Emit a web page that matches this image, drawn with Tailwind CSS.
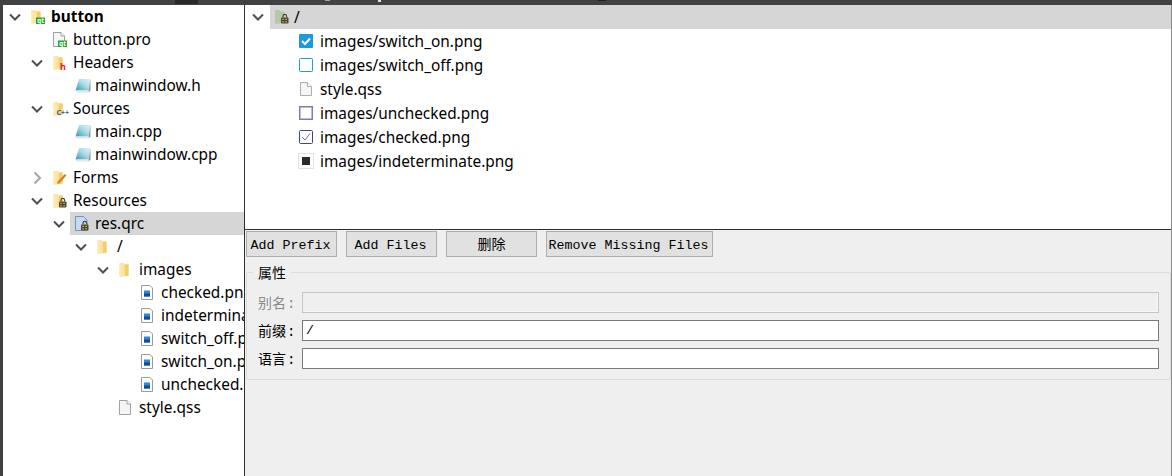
<!DOCTYPE html>
<html lang="en">

<head>
    <meta charset="UTF-8" />
    <script src="https://cdn.jsdelivr.net/npm/@tailwindcss/browser@4"></script>
    <title>Resource editor</title>
</head>

<body class="w-[1172px] h-[476px] overflow-hidden bg-[#404244] font-['Noto_Sans','Noto_Sans_CJK_SC',sans-serif] text-[15.4px] leading-[22px] text-black">

    <svg class="absolute w-0 h-0">
        <defs>
            <linearGradient id="fold" x1="0" y1="0" x2="1" y2="0">
                <stop offset="0" stop-color="#fdeebb" />
                <stop offset="1" stop-color="#f8d680" />
            </linearGradient>
            <linearGradient id="cpp" x1="0" y1="1" x2="1" y2="0">
                <stop offset="0" stop-color="#3f93b0" />
                <stop offset=".55" stop-color="#a9dde8" />
                <stop offset="1" stop-color="#dff3f6" />
            </linearGradient>
            <symbol id="chev-down" viewBox="0 0 16 16">
                <path d="M3 5.5l5 5 5-5" fill="none" stroke="#4f4f4f" stroke-width="2" />
            </symbol>
            <symbol id="chev-right" viewBox="0 0 16 16">
                <path d="M5.5 2.5l5.5 5.5-5.5 5.5" fill="none" stroke="#a6a6a6" stroke-width="2" />
            </symbol>
            <symbol id="folder" viewBox="0 0 16 16">
                <path d="M0 1h4.5l1.5 1.5h3.5v11l-6.5 1.2H0z" fill="url(#fold)" />
                <path d="M6 2.5h3.5v11l-3.5 .8z" fill="#f6cd68" />
            </symbol>
            <symbol id="lock" viewBox="0 0 16 16">
                <path d="M8 8.5V7.2a1.8 1.8 0 0 1 3.6 0v1.3" fill="none" stroke="#4b4630" stroke-width="1.2" />
                <rect x="6" y="8.5" width="7.5" height="6" rx="1" fill="#4b4630" />
                <path d="M7.3 9.8h1.5V11H7.3zm3 0h1.5V11h-1.5zM7.3 12.2h1.5v1.2H7.3zm3 0h1.5v1.2h-1.5z" fill="#d8b860" />
            </symbol>
            <symbol id="page" viewBox="0 0 16 16">
                <path d="M.5 .5h7.5l3.5 3.5v10.5h-11z" fill="#f5f5f5" stroke="#a0a0a0" />
                <path d="M8 .5v3.5h3.5" fill="#fff" stroke="#a0a0a0" />
            </symbol>
            <symbol id="png" viewBox="0 0 16 16">
                <path d="M.5 .5h8.5l2.5 2.5v11.5h-11z" fill="#fff" stroke="#9a9a9a" />
                <rect x="3" y="5.5" width="6" height="6" fill="#2a88d8" />
                <rect x="3" y="8.5" width="6" height="3" fill="#124a90" />
            </symbol>
            <symbol id="source" viewBox="0 0 16 16">
                <path d="M4 1h11.5l-2 11.5H.5z" fill="url(#cpp)" />
                <path d="M15.5 1v11.5l-2 2v-2z" fill="#9a9a9a" />
                <path d="M.5 12.5h13v2H1z" fill="#dfe8ea" />
            </symbol>
        </defs>
    </svg>

    <div class="absolute top-0 left-[175px] w-[23px] h-[4px] bg-[#2a2a2a]"></div>
    <div class="absolute top-0 left-[325px] w-[5px] h-[1px] bg-[#a0a0a0]"></div>
    <div class="absolute top-0 left-[378px] w-[3px] h-[2px] bg-[#e0e0e0]"></div>
    <div class="absolute top-0 left-[598px] w-[8px] h-[1px] bg-[#1f1f1f]"></div>

    <div class="flex h-full pt-[5px] pl-[3px]">

        <!-- project tree -->
        <div class="w-[241px] shrink-0 bg-white overflow-hidden whitespace-nowrap">
            <div class="flex h-[23px] items-center pl-[4px]">
                <svg class="size-4 shrink-0"><use href="#chev-down" /></svg>
                <div class="flex-1 h-full ml-[3px] pl-[5px] flex items-center gap-1">
                    <svg class="size-4 shrink-0" viewBox="0 0 16 16"><use href="#folder" /><rect x="5" y="8.5" width="9" height="6.5" fill="#1fa52d" /><text x="9.5" y="13.8" text-anchor="middle" font-size="6.5" font-weight="700" fill="#fff">qt</text></svg>
                    <span class="font-bold">button</span>
                </div>
            </div>
            <div class="flex h-[23px] items-center pl-[26px]">
                <div class="size-4 shrink-0"></div>
                <div class="flex-1 h-full ml-[3px] pl-[5px] flex items-center gap-1">
                    <svg class="size-4 shrink-0" viewBox="0 0 16 16"><use href="#page" /><rect x="5" y="8.5" width="9" height="6.5" fill="#1fa52d" /><text x="9.5" y="13.8" text-anchor="middle" font-size="6.5" font-weight="700" fill="#fff">qt</text></svg>
                    <span>button.pro</span>
                </div>
            </div>
            <div class="flex h-[23px] items-center pl-[26px]">
                <svg class="size-4 shrink-0"><use href="#chev-down" /></svg>
                <div class="flex-1 h-full ml-[3px] pl-[5px] flex items-center gap-1">
                    <svg class="size-4 shrink-0" viewBox="0 0 16 16"><use href="#folder" /><text x="7" y="14.5" font-size="9" font-weight="700" fill="#e02020">h</text></svg>
                    <span>Headers</span>
                </div>
            </div>
            <div class="flex h-[23px] items-center pl-[48px]">
                <div class="size-4 shrink-0"></div>
                <div class="flex-1 h-full ml-[3px] pl-[5px] flex items-center gap-1">
                    <svg class="size-4 shrink-0"><use href="#source" /></svg>
                    <span>mainwindow.h</span>
                </div>
            </div>
            <div class="flex h-[23px] items-center pl-[26px]">
                <svg class="size-4 shrink-0"><use href="#chev-down" /></svg>
                <div class="flex-1 h-full ml-[3px] pl-[5px] flex items-center gap-1">
                    <svg class="size-4 shrink-0" viewBox="0 0 16 16"><use href="#folder" /><text x="3.5" y="14" font-size="7" font-weight="700" fill="#2a5fa0">C++</text></svg>
                    <span>Sources</span>
                </div>
            </div>
            <div class="flex h-[23px] items-center pl-[48px]">
                <div class="size-4 shrink-0"></div>
                <div class="flex-1 h-full ml-[3px] pl-[5px] flex items-center gap-1">
                    <svg class="size-4 shrink-0"><use href="#source" /></svg>
                    <span>main.cpp</span>
                </div>
            </div>
            <div class="flex h-[23px] items-center pl-[48px]">
                <div class="size-4 shrink-0"></div>
                <div class="flex-1 h-full ml-[3px] pl-[5px] flex items-center gap-1">
                    <svg class="size-4 shrink-0"><use href="#source" /></svg>
                    <span>mainwindow.cpp</span>
                </div>
            </div>
            <div class="flex h-[23px] items-center pl-[26px]">
                <svg class="size-4 shrink-0"><use href="#chev-right" /></svg>
                <div class="flex-1 h-full ml-[3px] pl-[5px] flex items-center gap-1">
                    <svg class="size-4 shrink-0" viewBox="0 0 16 16"><use href="#folder" /><path d="M4 14l.8-2.6 7-7.5 1.6 1.6-7 7.5z" fill="#d9791c" /></svg>
                    <span>Forms</span>
                </div>
            </div>
            <div class="flex h-[23px] items-center pl-[26px]">
                <svg class="size-4 shrink-0"><use href="#chev-down" /></svg>
                <div class="flex-1 h-full ml-[3px] pl-[5px] flex items-center gap-1">
                    <svg class="size-4 shrink-0" viewBox="0 0 16 16"><use href="#folder" /><use href="#lock" /></svg>
                    <span>Resources</span>
                </div>
            </div>
            <div class="flex h-[23px] items-center pl-[48px]">
                <svg class="size-4 shrink-0"><use href="#chev-down" /></svg>
                <div class="flex-1 h-full ml-[3px] pl-[5px] flex items-center gap-1 bg-[#d6d6d6]">
                    <svg class="size-4 shrink-0" viewBox="0 0 16 16"><path d="M.5 .5h8l3.5 3.5v10.5H.5z" fill="#c6daf2" stroke="#6e92c4" /><use href="#lock" /></svg>
                    <span>res.qrc</span>
                </div>
            </div>
            <div class="flex h-[23px] items-center pl-[70px]">
                <svg class="size-4 shrink-0"><use href="#chev-down" /></svg>
                <div class="flex-1 h-full ml-[3px] pl-[5px] flex items-center gap-1">
                    <svg class="size-4 shrink-0"><use href="#folder" /></svg>
                    <span>/</span>
                </div>
            </div>
            <div class="flex h-[23px] items-center pl-[92px]">
                <svg class="size-4 shrink-0"><use href="#chev-down" /></svg>
                <div class="flex-1 h-full ml-[3px] pl-[5px] flex items-center gap-1">
                    <svg class="size-4 shrink-0"><use href="#folder" /></svg>
                    <span>images</span>
                </div>
            </div>
            <div class="flex h-[23px] items-center pl-[114px]">
                <div class="size-4 shrink-0"></div>
                <div class="flex-1 h-full ml-[3px] pl-[5px] flex items-center gap-1">
                    <svg class="size-4 shrink-0"><use href="#png" /></svg>
                    <span>checked.png</span>
                </div>
            </div>
            <div class="flex h-[23px] items-center pl-[114px]">
                <div class="size-4 shrink-0"></div>
                <div class="flex-1 h-full ml-[3px] pl-[5px] flex items-center gap-1">
                    <svg class="size-4 shrink-0"><use href="#png" /></svg>
                    <span>indeterminate.png</span>
                </div>
            </div>
            <div class="flex h-[23px] items-center pl-[114px]">
                <div class="size-4 shrink-0"></div>
                <div class="flex-1 h-full ml-[3px] pl-[5px] flex items-center gap-1">
                    <svg class="size-4 shrink-0"><use href="#png" /></svg>
                    <span>switch_off.png</span>
                </div>
            </div>
            <div class="flex h-[23px] items-center pl-[114px]">
                <div class="size-4 shrink-0"></div>
                <div class="flex-1 h-full ml-[3px] pl-[5px] flex items-center gap-1">
                    <svg class="size-4 shrink-0"><use href="#png" /></svg>
                    <span>switch_on.png</span>
                </div>
            </div>
            <div class="flex h-[23px] items-center pl-[114px]">
                <div class="size-4 shrink-0"></div>
                <div class="flex-1 h-full ml-[3px] pl-[5px] flex items-center gap-1">
                    <svg class="size-4 shrink-0"><use href="#png" /></svg>
                    <span>unchecked.png</span>
                </div>
            </div>
            <div class="flex h-[23px] items-center pl-[92px]">
                <div class="size-4 shrink-0"></div>
                <div class="flex-1 h-full ml-[3px] pl-[5px] flex items-center gap-1">
                    <svg class="size-4 shrink-0"><use href="#page" /></svg>
                    <span>style.qss</span>
                </div>
            </div>
        </div>

        <div class="w-[1px] shrink-0 bg-[#2e2f30]"></div>

        <!-- resource editor -->
        <div class="flex-1 flex flex-col bg-[#efefef] border-r border-[#8a8a8a]">

            <div class="h-[225px] shrink-0 bg-white border-b border-[#2e2f30]">
                <div class="flex h-[24px]">
                    <div class="w-[25px] flex items-center justify-center pl-[1px]">
                        <svg class="size-4"><use href="#chev-down" /></svg>
                    </div>
                    <div class="flex-1 bg-[#d6d6d6] flex items-center pl-[5px] gap-[3px]">
                        <svg class="size-4 shrink-0" viewBox="0 0 16 16"><path d="M0 1h4.5l1.5 1.5h3.5v11l-6.5 1.2H0z" fill="#b5c9aa" /><use href="#lock" /></svg>
                        <span class="pt-[2px]">/</span>
                    </div>
                </div>
                <div class="flex h-[24px] items-center pl-[54px] gap-[7px]">
                    <svg class="size-[14px] shrink-0" viewBox="0 0 14 14"><rect width="14" height="14" rx="1" fill="#1b9ae0" /><path d="M3 7l3 3 5-5.5" fill="none" stroke="#fff" stroke-width="2" /></svg>
                    <span class="pt-[2px]">images/switch_on.png</span>
                </div>
                <div class="flex h-[24px] items-center pl-[54px] gap-[7px]">
                    <svg class="size-[14px] shrink-0" viewBox="0 0 14 14"><rect x=".5" y=".5" width="13" height="13" rx="1" fill="#fff" stroke="#1b9ae0" /></svg>
                    <span class="pt-[2px]">images/switch_off.png</span>
                </div>
                <div class="flex h-[24px] items-center pl-[54px] gap-[7px]">
                    <svg class="size-[14px] shrink-0" viewBox="0 0 14 14"><path d="M1.5 .5h7l4 4v9h-11z" fill="#f6f6f6" stroke="#adadad" /><path d="M8.5 .5v4h4" fill="#fff" stroke="#adadad" /></svg>
                    <span class="pt-[2px]">style.qss</span>
                </div>
                <div class="flex h-[24px] items-center pl-[54px] gap-[7px]">
                    <svg class="size-[14px] shrink-0" viewBox="0 0 14 14"><rect x=".75" y=".75" width="12.5" height="12.5" fill="#fff" stroke="#7b80ab" stroke-width="1.5" /></svg>
                    <span class="pt-[2px]">images/unchecked.png</span>
                </div>
                <div class="flex h-[24px] items-center pl-[54px] gap-[7px]">
                    <svg class="size-[14px] shrink-0" viewBox="0 0 14 14"><rect x=".5" y=".5" width="13" height="13" rx="1" fill="#fff" stroke="#3d4390" /><path d="M3 7l3 3 5-6.5" fill="none" stroke="#6d72ac" /></svg>
                    <span class="pt-[2px]">images/checked.png</span>
                </div>
                <div class="flex h-[24px] items-center pl-[53px] gap-[6px]">
                    <svg class="size-[16px] shrink-0" viewBox="0 0 16 16"><rect x=".5" y=".5" width="15" height="15" fill="#fff" stroke="#e2e2e2" /><rect x="4" y="4" width="8" height="8" fill="#2b2b2b" /></svg>
                    <span class="pt-[2px]">images/indeterminate.png</span>
                </div>
            </div>

            <div class="flex gap-[9px] mt-[1px] ml-[1px] font-['Liberation_Mono','Noto_Sans_CJK_SC',monospace] text-[13.33px]">
                <button class="w-[91px] h-[26px] pt-[3px] pr-[2px] bg-[#e1e1e1] border border-[#adadad]">Add Prefix</button>
                <button class="w-[91px] h-[26px] pt-[3px] pr-[2px] bg-[#e1e1e1] border border-[#adadad]">Add Files</button>
                <button class="w-[91px] h-[26px] pt-[2px] bg-[#e1e1e1] border border-[#adadad] text-[14px]">删除</button>
                <button class="w-[167px] h-[26px] pt-[3px] pr-[2px] bg-[#e1e1e1] border border-[#adadad]">Remove Missing Files</button>
            </div>

            <div class="relative mt-[15px] ml-[1px] border border-[#dcdcdc] rounded-[2px] pt-[19px] pb-[10px] px-[11px] font-['Noto_Sans_CJK_SC',sans-serif] text-[14px] leading-[16px] flex flex-col gap-[7px]">
                <span class="absolute -top-[9px] left-[6px] px-[5px] bg-[#efefef]">属性</span>
                <div class="flex h-[21px] items-center">
                    <span class="w-[44px] shrink-0 text-[#8a8a8a]">别名<span class="ml-[1px] font-['Liberation_Mono',monospace]">:</span></span>
                    <div class="flex-1 h-full bg-[#efefef] border border-[#c4c4c4] shadow-[inset_-1px_-1px_0_#f8f8f8]"></div>
                </div>
                <div class="flex h-[21px] items-center">
                    <span class="w-[44px] shrink-0">前缀<span class="ml-[1px] font-['Liberation_Mono',monospace]">:</span></span>
                    <div class="flex-1 h-full bg-white border border-[#7a7a7a] px-[3px] flex items-center font-['Liberation_Mono',monospace] text-[13.33px]">/</div>
                </div>
                <div class="flex h-[21px] items-center">
                    <span class="w-[44px] shrink-0">语言<span class="ml-[1px] font-['Liberation_Mono',monospace]">:</span></span>
                    <div class="flex-1 h-full bg-white border border-[#7a7a7a]"></div>
                </div>
            </div>

        </div>

    </div>

</body>

</html>
